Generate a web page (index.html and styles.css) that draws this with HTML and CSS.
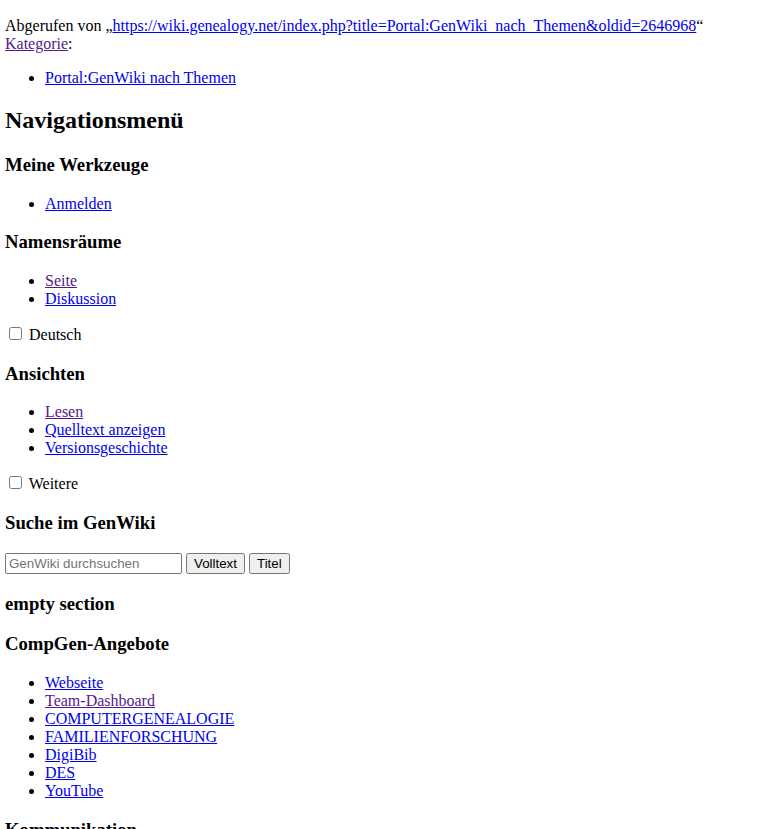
FILE: index.html
```html
<!DOCTYPE html>
<html lang="de">
<head>
<meta charset="utf-8">
<title>Portal:GenWiki nach Themen</title>
<link rel="stylesheet" href="styles.css">
</head>
<body class="page">
<div class="printfooter">Abgerufen von „<a href="#">https://wiki.genealogy.net/index.php?title=Portal:GenWiki_nach_Themen&amp;oldid=2646968</a>“</div>
<div class="catlinks"><a href="#" class="visited">Kategorie</a>:
<ul>
<li><a href="#">Portal:GenWiki nach Themen</a></li>
</ul>
</div>
<h2 class="nav-title">Navigationsmenü</h2>
<div class="portlet">
<h3>Meine Werkzeuge</h3>
<ul>
<li><a href="#">Anmelden</a></li>
</ul>
</div>
<div class="portlet">
<h3>Namensräume</h3>
<ul>
<li><a href="#" class="visited">Seite</a></li>
<li><a href="#">Diskussion</a></li>
</ul>
</div>
<div class="dropdown"><input type="checkbox" class="check"> <label>Deutsch</label></div>
<div class="portlet">
<h3>Ansichten</h3>
<ul>
<li><a href="#" class="visited">Lesen</a></li>
<li><a href="#">Quelltext anzeigen</a></li>
<li><a href="#">Versionsgeschichte</a></li>
</ul>
</div>
<div class="dropdown"><input type="checkbox" class="check"> <label>Weitere</label></div>
<div class="portlet">
<h3>Suche im GenWiki</h3>
<form class="search"><input type="search" class="search-input" placeholder="GenWiki durchsuchen"> <button type="button" class="btn">Volltext</button> <button type="button" class="btn">Titel</button></form>
</div>
<div class="portlet">
<h3>empty section</h3>
</div>
<div class="portlet">
<h3>CompGen-Angebote</h3>
<ul>
<li><a href="#">Webseite</a></li>
<li><a href="#" class="visited">Team-Dashboard</a></li>
<li><a href="#">COMPUTERGENEALOGIE</a></li>
<li><a href="#">FAMILIENFORSCHUNG</a></li>
<li><a href="#">DigiBib</a></li>
<li><a href="#">DES</a></li>
<li><a href="#">YouTube</a></li>
</ul>
</div>
<div class="portlet">
<h3>Kommunikation</h3>
<ul>
<li><a href="#">Forum</a></li>
<li><a href="#">Mailinglisten</a></li>
</ul>
</div>
</body>
</html>
```
FILE: styles.css
```css
html {
  background: #ffffff;
}
.page {
  margin: 0;
  padding: 17px 5px 8px 5px;
  font-family: "Liberation Serif", "Times New Roman", serif;
  font-size: 16px;
  color: #000000;
}
.page a {
  color: #0000ee;
}
.page a.visited {
  color: #551a8b;
}
.search-input {
  font-family: "Liberation Sans", Arial, sans-serif;
  font-size: 13.333px;
  width: 177px;
  box-sizing: border-box;
  height: 21px;
  margin: 0;
}
.btn {
  font-family: "Liberation Sans", Arial, sans-serif;
  font-size: 13.333px;
  height: 21px;
  margin: 0;
}
.check {
  margin: 3px 3px 3px 4px;
}
```
